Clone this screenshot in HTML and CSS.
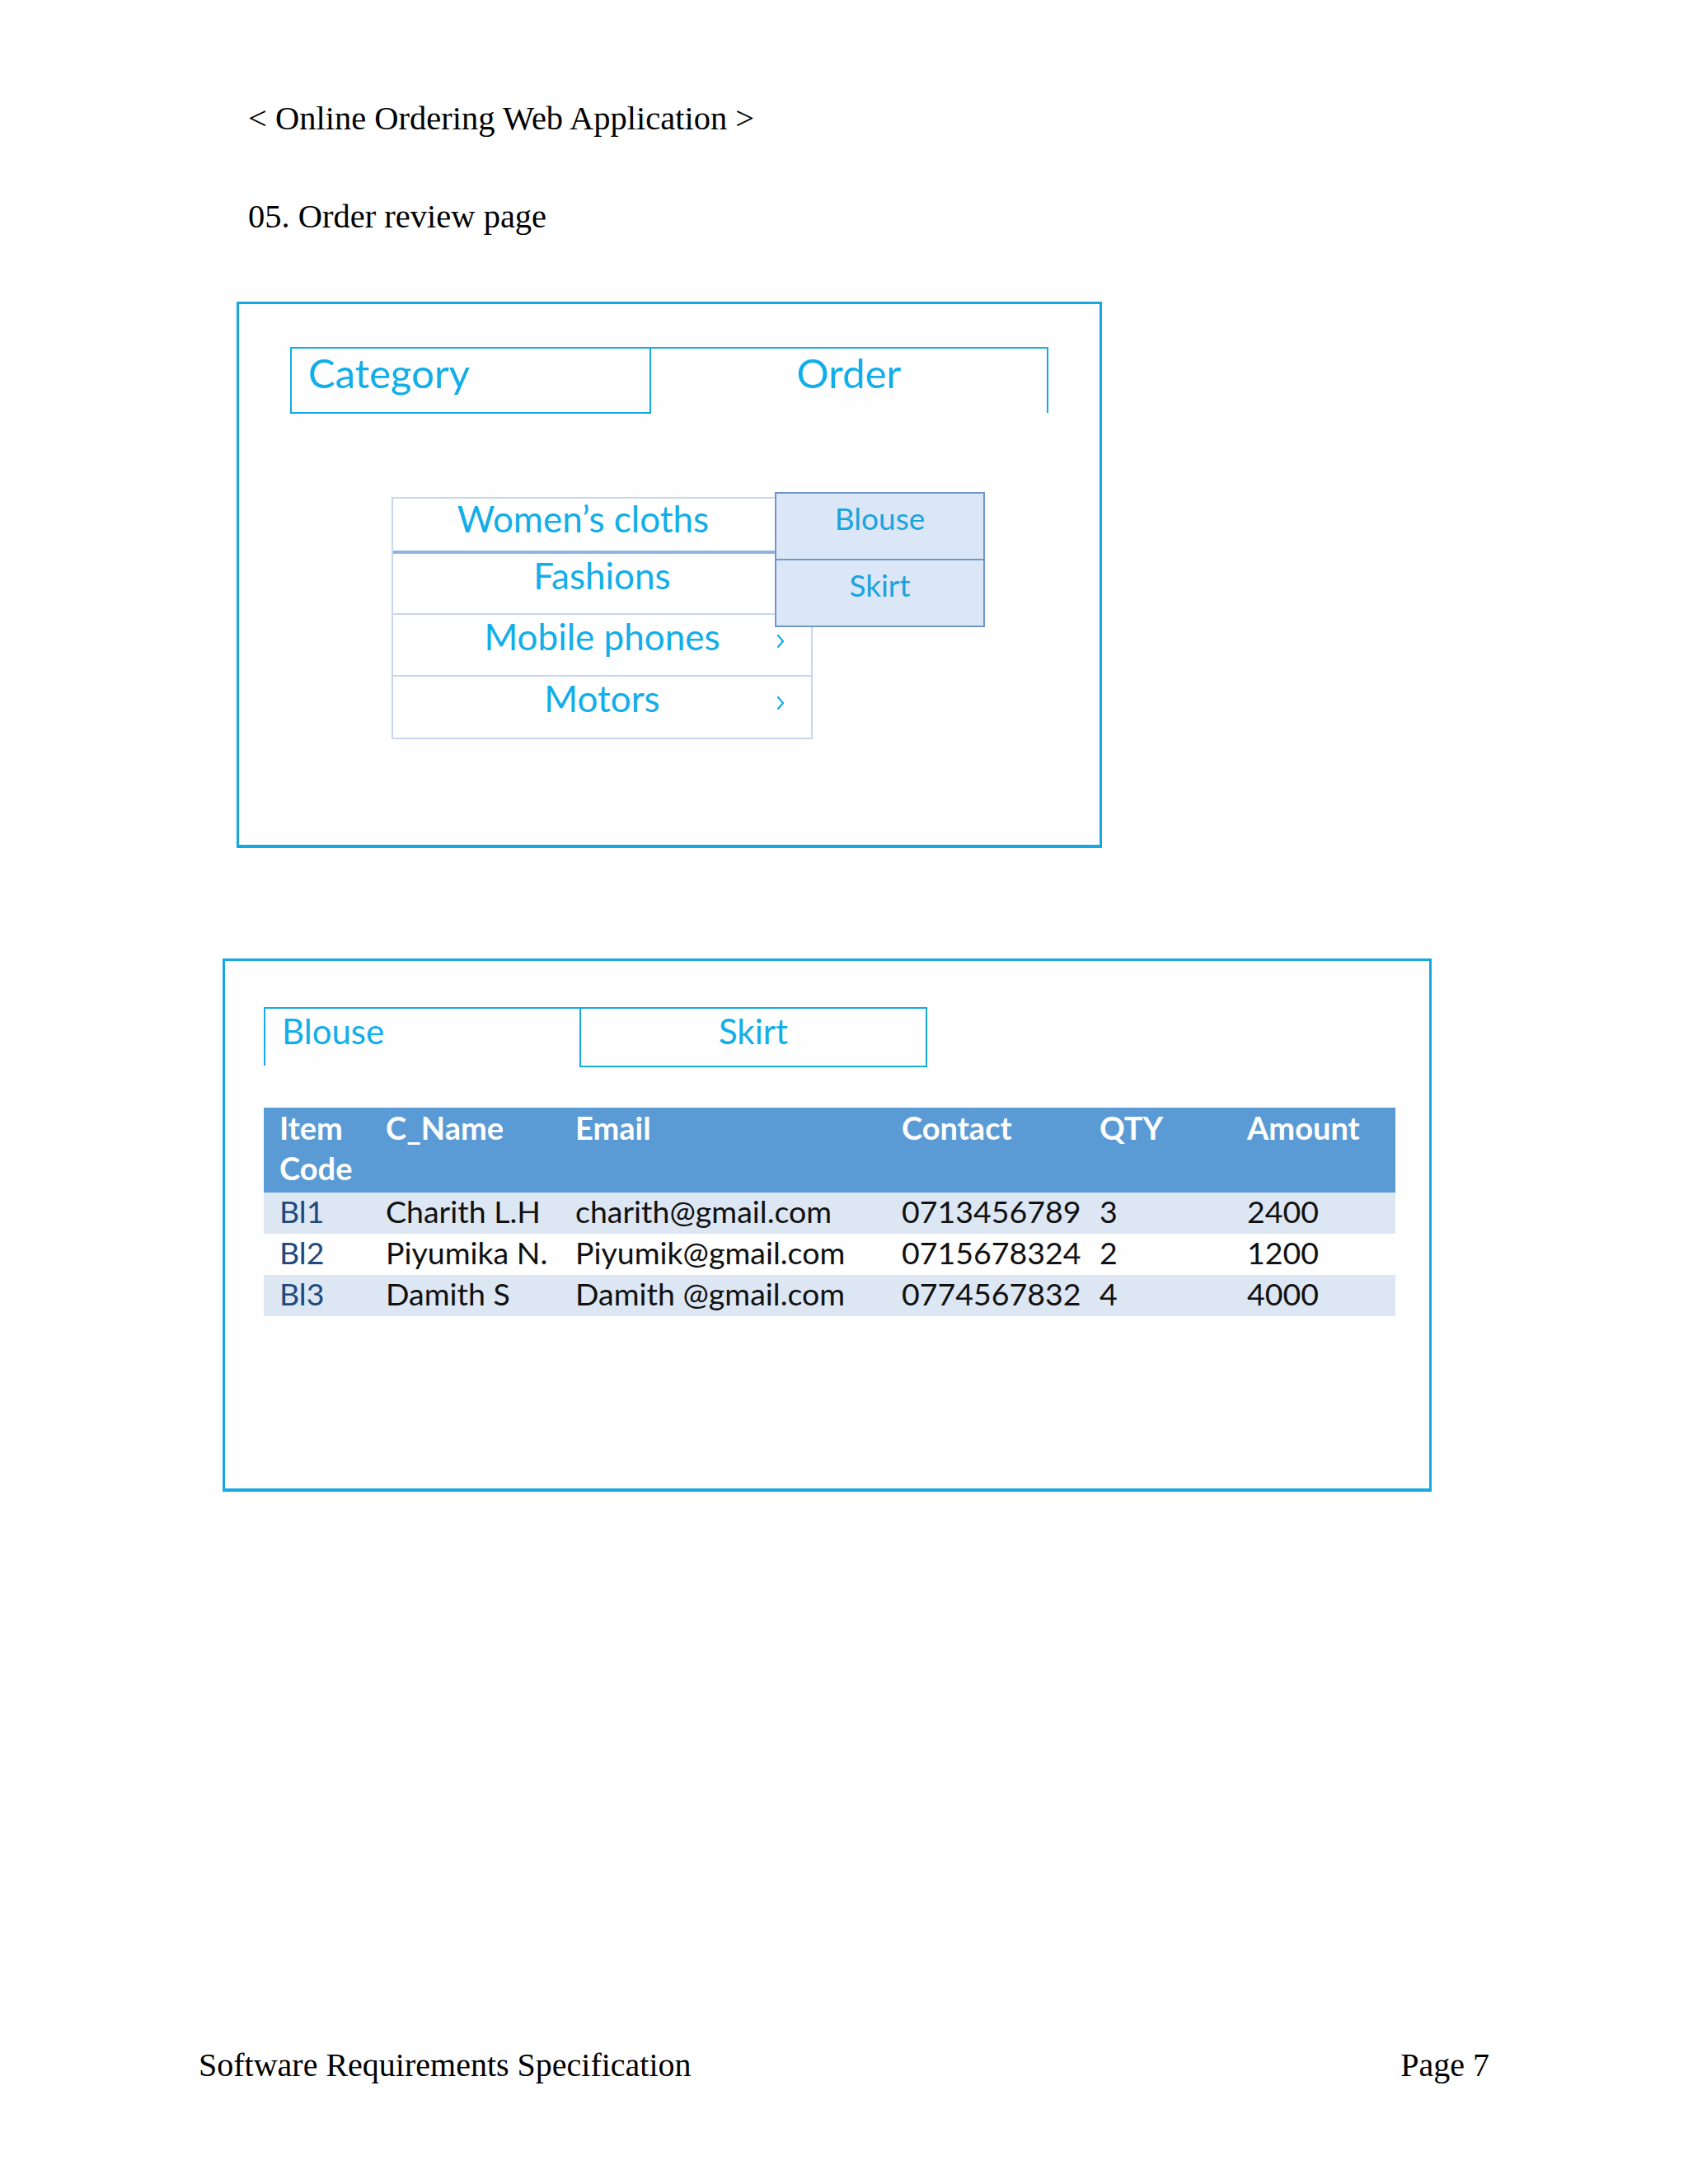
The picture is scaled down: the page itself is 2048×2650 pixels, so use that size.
FILE: index.html
```html
<!DOCTYPE html>
<html lang="en">
<head>
<meta charset="utf-8">
<title>Order review page</title>
<link rel="stylesheet" href="styles.css">
</head>
<body>
<div class="page">
  <p class="doc-title">&lt; Online Ordering Web Application &gt;</p>
  <p class="doc-sub">05. Order review page</p>

  <section class="frame frame-one">
    <div class="tabs tabs-one">
      <div class="tab tab-category">Category</div>
      <div class="tab tab-order">Order</div>
    </div>

    <div class="menu">
      <div class="menu-row row-first">
        <span class="row-label">Women’s cloths</span>
      </div>
      <div class="menu-row row-two">
        <span class="row-label">Fashions</span>
        <svg class="chev" width="10" height="18" viewBox="0 0 10 18"><path d="M2 2 L8 9 L2 16" fill="none" stroke="#14abe6" stroke-width="2.2" stroke-linecap="round" stroke-linejoin="round"/></svg>
      </div>
      <div class="menu-row row-three">
        <span class="row-label">Mobile phones</span>
        <svg class="chev" width="10" height="18" viewBox="0 0 10 18"><path d="M2 2 L8 9 L2 16" fill="none" stroke="#14abe6" stroke-width="2.2" stroke-linecap="round" stroke-linejoin="round"/></svg>
      </div>
      <div class="menu-row row-last">
        <span class="row-label">Motors</span>
        <svg class="chev" width="10" height="18" viewBox="0 0 10 18"><path d="M2 2 L8 9 L2 16" fill="none" stroke="#14abe6" stroke-width="2.2" stroke-linecap="round" stroke-linejoin="round"/></svg>
      </div>

      <div class="submenu">
        <div class="sub-item">Blouse</div>
        <div class="sub-item sub-second">Skirt</div>
      </div>
    </div>
  </section>

  <section class="frame frame-two">
    <div class="tabs tabs-two">
      <div class="tab tab-blouse">Blouse</div>
      <div class="tab tab-skirt">Skirt</div>
    </div>

    <table class="orders">
      <colgroup>
        <col class="c1"><col class="c2"><col class="c3"><col class="c4"><col class="c5"><col class="c6">
      </colgroup>
      <thead>
        <tr>
          <th>Item Code</th>
          <th>C_Name</th>
          <th>Email</th>
          <th>Contact</th>
          <th>QTY</th>
          <th>Amount</th>
        </tr>
      </thead>
      <tbody>
        <tr class="alt">
          <td class="code">Bl1</td>
          <td>Charith L.H</td>
          <td>charith@gmail.com</td>
          <td>0713456789</td>
          <td>3</td>
          <td>2400</td>
        </tr>
        <tr>
          <td class="code">Bl2</td>
          <td>Piyumika N.</td>
          <td>Piyumik@gmail.com</td>
          <td>0715678324</td>
          <td>2</td>
          <td>1200</td>
        </tr>
        <tr class="alt">
          <td class="code">Bl3</td>
          <td>Damith S</td>
          <td>Damith @gmail.com</td>
          <td>0774567832</td>
          <td>4</td>
          <td>4000</td>
        </tr>
      </tbody>
    </table>
  </section>

  <footer class="doc-footer">
    <span>Software Requirements Specification</span>
    <span>Page 7</span>
  </footer>
</div>
</body>
</html>
```

FILE: styles.css
```css
* { box-sizing: border-box; }

html, body {
  margin: 0;
  padding: 0;
  background: #ffffff;
}

.page {
  width: 2048px;
  height: 2650px;
  padding-top: 121px;
  overflow: hidden;
  font-family: "Liberation Serif", "Times New Roman", serif;
  color: #000000;
}

.doc-title,
.doc-sub {
  margin: 0 0 0 301px;
  font-size: 40.5px;
  line-height: 46px;
}

.doc-sub { margin-top: 73px; }

/* ---------- frames ---------- */
.frame {
  border: 3px solid #16a8e2;
  background: #fefefe;
  font-family: Lato, "Open Sans", sans-serif;
}

.frame-one {
  margin: 80px 0 0 287px;
  width: 1050px;
  height: 663px;
  border-bottom-width: 4px;
}

.frame-two {
  margin: 134px 0 0 270px;
  width: 1467px;
  height: 647px;
  border-bottom-width: 4px;
}

/* ---------- tabs ---------- */
.tabs {
  display: flex;
  align-items: flex-start;
}

.tabs-one { margin: 52px 0 0 62px; }
.tabs-two { margin: 56px 0 0 47px; }

.tab {
  color: #12aee9;
  border: 2px solid #14abe6;
}

.tab-category {
  width: 438px;
  height: 81px;
  font-size: 49px;
  line-height: 49px;
  padding: 5px 0 0 20px;
}

.tab-order {
  width: 482px;
  height: 80px;
  border-left: 0;
  border-bottom: 0;
  text-align: center;
  font-size: 49px;
  line-height: 49px;
  padding-top: 5px;
}

.tab-blouse {
  width: 383px;
  height: 71px;
  border-right: 0;
  border-bottom: 0;
  font-size: 42px;
  line-height: 42px;
  padding: 6px 0 0 20px;
}

.tab-skirt {
  width: 422px;
  height: 73px;
  text-align: center;
  font-size: 42px;
  line-height: 42px;
  padding-top: 6px;
}

/* ---------- category menu ---------- */
.menu {
  position: relative;
  margin: 101px 0 0 185px;
  width: 511px;
  border: 2px solid #c6d6ec;
  background: #ffffff;
}

.menu-row {
  display: grid;
  grid-template-columns: 1fr auto 1fr;
  align-items: start;
  height: 74px;
  padding-top: 4px;
  border-bottom: 2px solid #c6d6ec;
  color: #12aee9;
  font-size: 44px;
  line-height: 44px;
}

.row-first {
  height: 67px;
  padding-top: 2px;
  padding-right: 46px;
  border-bottom: 4px solid #8fb4e2;
}

.row-three { height: 75px; }

.row-last { border-bottom: 0; }

.row-label {
  grid-column: 2;
  white-space: nowrap;
}

.chev {
  grid-column: 3;
  justify-self: end;
  margin: 19px 32px 0 0;
}

.submenu {
  position: absolute;
  left: 463px;
  top: -8px;
  width: 255px;
}

.sub-item {
  height: 83px;
  border: 2px solid #7097cb;
  background: #dbe7f6;
  text-align: center;
  color: #1aa3df;
  font-size: 37px;
  line-height: 37px;
  padding-top: 11px;
}

.sub-second { margin-top: -2px; }

/* ---------- orders table ---------- */
.orders {
  margin: 49px 0 0 47px;
  width: 1373px;
  border-collapse: collapse;
  table-layout: fixed;
  font-size: 37.5px;
}

.c1 { width: 129px; }
.c2 { width: 230px; }
.c3 { width: 396px; }
.c4 { width: 240px; }
.c5 { width: 179px; }
.c6 { width: 199px; }

.orders th {
  background: #5b9bd5;
  color: #ffffff;
  font-weight: 700;
  font-size: 38px;
  text-align: left;
  vertical-align: top;
  padding: 0 0 5px 19px;
  line-height: 49px;
}

.orders td {
  padding: 0 0 4px 19px;
  line-height: 46px;
  white-space: nowrap;
  color: #111111;
}

.orders tr.alt td { background: #dde7f4; }

.orders td.code { color: #1f4a7e; }

/* ---------- footer ---------- */
.doc-footer {
  display: flex;
  justify-content: space-between;
  margin: 673px 0 0 241px;
  width: 1566px;
  font-size: 40px;
  line-height: 46px;
}
```
